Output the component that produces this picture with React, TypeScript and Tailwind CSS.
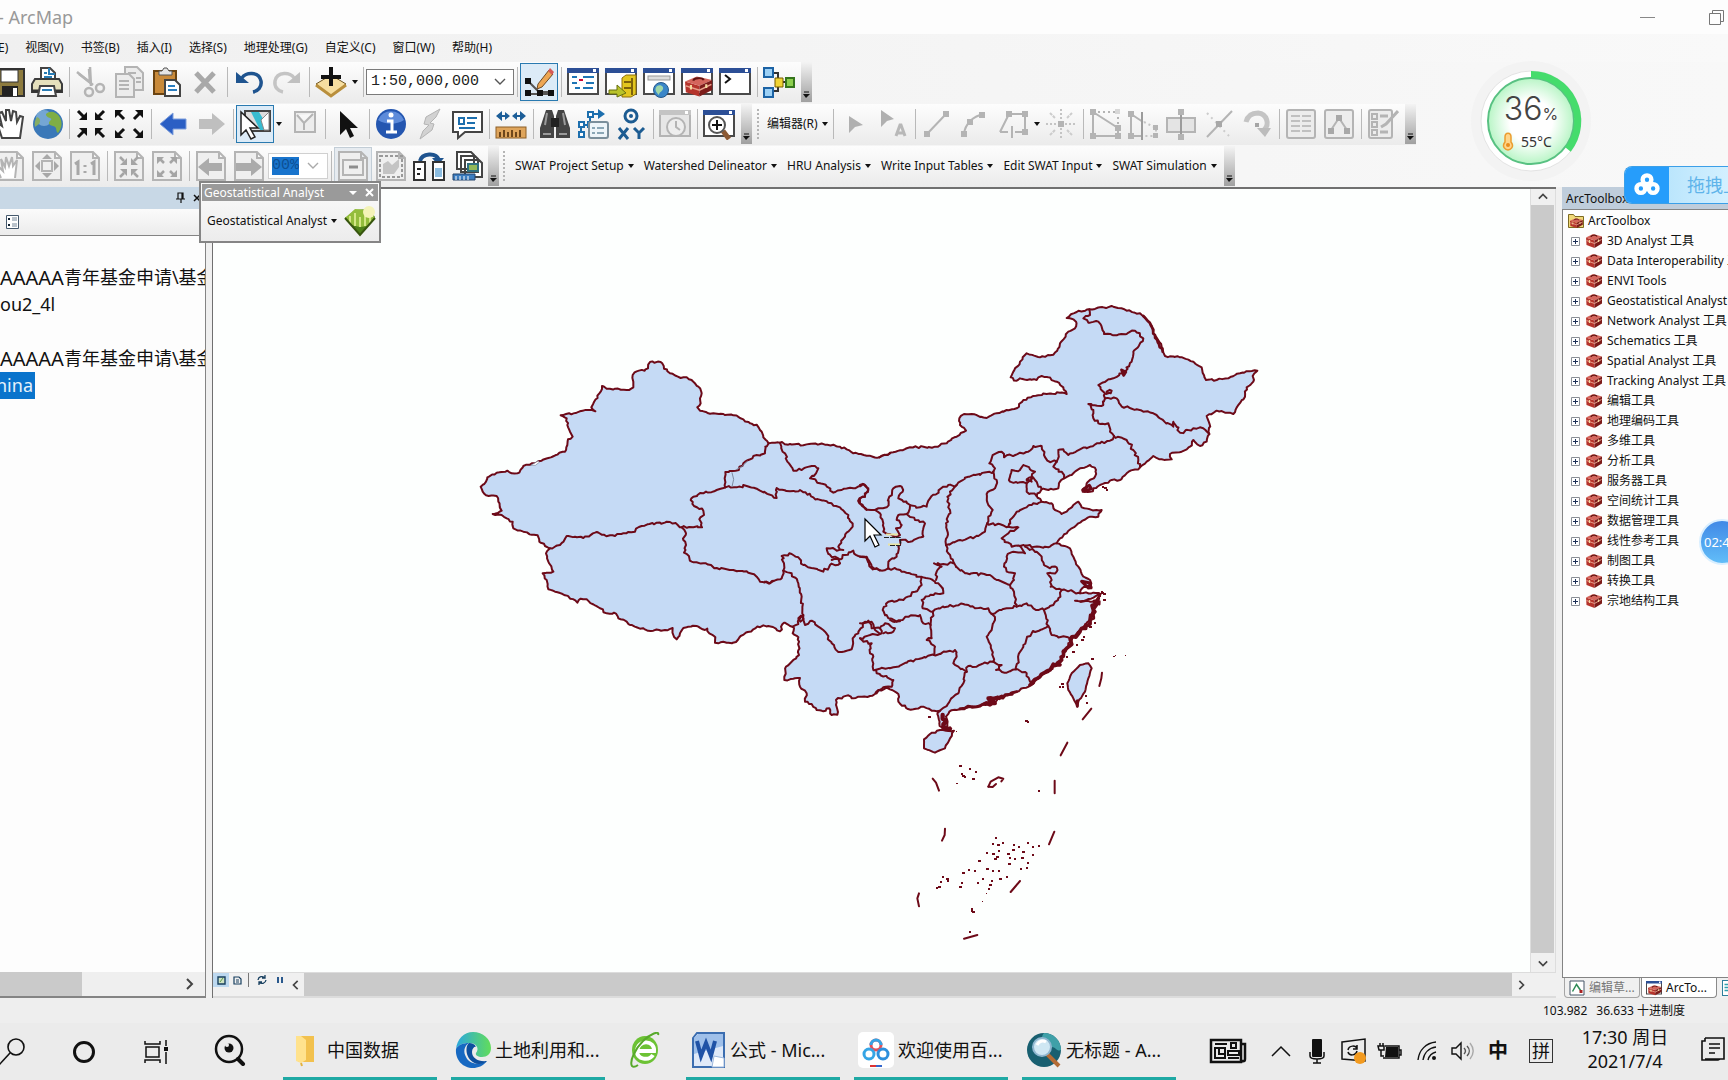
import React, { FC, ReactNode } from 'react';
import clsx from 'clsx';

/* ---------- map geometry ---------- */

// Border lines are stored in three tiles, each at three units per map pixel.
const WEST_TOP =
  '1260,460 1228,472 1190,467 1150,460 1130,448 1110,440 1090,434 1050,432 1000,436 960,432 930,428 896,430 880,412 870,390 860,374 840,370 820,358 790,346 760,342 715,340 690,332 682,322 692,310 690,295 695,280 685,260 665,240 650,232 632,234 600,220 582,206 572,186 540,186 534,205 524,212 500,214 488,225 490,245 490,262 470,270 435,266 410,266 396,258 388,280 372,306 364,322 376,334 355,330 320,338 272,346 290,355 292,375 300,395 308,410 294,418 292,435 285,455 262,464 235,474 205,484 180,494 160,498 148,518 125,520 112,512 80,518 52,532 48,545 32,560 38,575 48,586 80,588 85,605 95,632 68,642 95,645 110,655 128,665 130,685 160,695 185,704 203,706 208,725 225,738 240,745 228,760 235,785 250,815 230,818 218,820 230,840 235,868 255,875 285,886 322,908 332,896 350,898 375,916 410,940 432,938 445,955 470,965 480,975 510,986 550,992 585,990 608,984 610,1005 620,1018 630,1000 640,984 655,980 685,980 705,990 712,986 718,1000 732,1008 735,1028 770,1028 798,1026 812,1008 850,988 880,976 905,980 930,994 942,968 960,978 972,984 968,1000 985,1012 987,1065 970,1080 948,1100 943,1140 970,1136 990,1134 990,1160 1010,1180 1005,1205 1025,1212 1040,1230 1060,1234 1078,1225 1085,1245 1102,1244 1098,1200 1120,1190 1135,1186 1145,1195 1165,1190 1200,1188 1215,1182 1225,1170 1255,1165';

const WEST_INNER = [
  '896,430 886,440 885,460 850,468 820,490 797,512 766,516 764,535 766,562',
  '766,562 740,570 700,580 670,590 662,600 672,618 700,632 702,645 688,658 696,682 670,682 635,682 600,666 560,668 515,678 495,695 460,700 435,708 395,704 375,698 340,714 315,710 290,708 270,735 240,745',
  '635,682 648,700 640,720 648,735 642,758 665,785 700,790 740,804 790,810 830,814 860,830 870,845 900,850 935,835 940,812',
  '940,812 942,790 935,768 965,762 985,772 1000,795 1030,805 1060,815 1080,795 1110,790',
  '766,562 800,562 830,558 870,572 920,594 920,564 960,574 990,570 1030,592 1070,604 1110,622 1135,645 1148,680 1125,710 1105,740 1120,750 1095,748 1070,745 1075,762 1105,775 1110,790',
  '1085,780 1112,778 1118,765 1125,765 1150,752 1165,768 1190,770 1205,800 1230,812',
  '930,428 945,460 952,485 970,512 1000,506 1025,498 1045,505 1038,520 1020,535 1060,552 1090,578 1115,570 1150,565 1180,552 1195,565 1185,590 1168,595 1168,610 1190,630',
  '940,812 965,820 985,850 995,890 1000,945 985,960 985,972 968,980',
  '1000,945 1005,975 1025,962 1045,980 1065,995 1085,1030 1105,1056 1145,1048 1148,1015 1165,1000 1172,985 1185,965 1205,965 1215,990 1230,1000',
];

const EAST_OUTLINE =
  '58,502 90,488 150,472 225,470 260,460 290,440 318,422 300,405 298,385 312,372 335,372 380,384 410,370 440,360 470,355 490,330 520,318 560,312 600,308 620,312 610,292 590,275 565,262 545,258 530,270 510,268 480,265 470,272 452,262 460,245 480,215 500,190 540,202 570,196 592,182 600,160 625,125 645,115 648,95 640,88 620,84 650,66 688,58 720,52 760,50 800,62 840,70 870,100 880,130 905,170 915,198 960,202 1000,215 1025,232 1038,270 1070,270 1105,265 1140,250 1168,244 1192,242 1178,258 1180,275 1160,292 1155,320 1135,345 1120,372 1095,368 1070,362 1040,378 1048,400 1048,432 1040,455 1020,468 1000,450 990,470 965,485 930,492 935,508 905,508 880,498 860,515 840,532 800,550 780,570 750,572 720,585 690,605 668,605 680,580 705,560 708,540 690,525 660,535 635,555 612,565 600,575 595,595 565,600 545,598 530,618 545,635 575,640 585,660 605,672 620,665 640,645 655,635 665,652 690,658 725,660 715,680 690,680 655,700 635,715 620,730 600,745 590,760 630,775 640,800 655,830 665,852 690,870 694,895 672,890 660,910 700,908 722,912 680,930 645,932 690,935 715,930 700,960 690,990 665,1015 640,1040 620,1075 605,1110 570,1140 540,1160 510,1185 470,1205 420,1220 400,1240 350,1250 300,1258 268,1265 258,1280 265,1318 248,1318 238,1300 232,1272 240,1262 215,1262 190,1250 160,1258 138,1254 115,1235 115,1212 85,1195';

const EAST_INNER = [
  '0,585 15,585 25,600 15,620 0,625 0,640 20,658 45,660 80,652 88,620 100,595 125,590 128,605 115,625 130,635 150,645 180,652 200,650 205,632 250,590 290,585 325,560 400,545',
  '45,660 60,670 70,700 70,725 90,732 105,740 120,735 108,715 125,705 110,690 115,675 140,672 150,648',
  '140,672 165,690 195,700 190,740 150,755 120,750 115,770 110,800 90,810 85,835',
  '0,800 20,805 35,835 65,842 85,835',
  '85,835 110,838 150,850 180,860 215,868 235,880 248,895',
  '290,585 270,605 262,635 270,660 258,700 262,740 258,765',
  '258,765 265,790 280,815 288,830',
  '280,820 250,822 222,820 245,830 230,845 228,870',
  '258,765 300,750 355,738 375,725 382,700',
  '400,545 410,570 405,595 380,612 385,645 398,660 385,680 382,700',
  '400,545 405,535 388,520 395,505 408,490 425,485 432,502 480,488 505,485 520,468 545,468 552,495 562,512 590,515',
  '590,515 580,530 605,545 612,565',
  '590,515 595,480 610,478 625,495 660,478 720,460 750,452 762,438',
  '450,560 455,540 480,540 490,525 510,538 525,545 515,560 500,580 450,575 450,560',
  '515,560 525,570 535,590 545,598',
  '500,580 500,605 530,618',
  '500,568 518,562 515,575 500,572',
  '382,700 445,710 450,690 470,665 510,645 545,635',
  '445,710 475,712 445,730 425,745 455,770 480,768 510,765 525,770 555,770 570,770 590,760',
  '480,768 495,790 460,785 440,800 432,830 440,845 465,850 462,870 450,885',
  '288,830 320,850 380,855 410,870 450,885 462,905 470,945',
  '495,770 530,785 545,800 552,825 570,835 590,832 590,845 575,850 562,850 575,870 572,890 605,900 640,905 660,910',
  '605,900 595,925 580,945 552,960 520,955 500,940 470,950',
  '470,950 440,955 395,972 385,955 345,955 325,945 310,942 280,950 270,945 235,955 218,965',
  '248,895 250,910 225,910 185,930 188,955 218,965',
  '185,860 185,885 165,905 130,930 85,935 68,960 85,985 110,995 140,980 180,975 190,1000 212,1005',
  '218,965 212,1000 215,1045 200,1050 225,1070 222,1095',
  '222,1095 185,1105 140,1118 100,1132 45,1140',
  '0,1045 10,1055 35,1060 30,1090 40,1100 38,1130 50,1150 100,1170 95,1190 70,1192 50,1210',
  '0,1045 30,1035 65,1030 60,1015',
  '0,1000 25,992 35,1015 60,1015 75,1000 105,1015 100,1025 70,1030',
  '90,990 120,994',
  '395,972 405,990 395,1020 380,1040 395,1080 400,1115',
  '222,1095 285,1080 290,1100 280,1120 295,1130 320,1145',
  '320,1145 325,1128 350,1130 370,1120 400,1115',
  '400,1115 425,1125 408,1140 440,1148 468,1138',
  '468,1138 475,1110 490,1065 515,1030 565,1008',
  '552,960 565,1008 575,1035 605,1040 630,1045',
  '468,1138 500,1150 510,1175',
  '320,1145 310,1180 295,1210 265,1240 240,1262',
  '688,58 690,75 670,85 685,98 715,95 732,132 770,136 800,132 825,122 850,145 820,185 815,215 795,245 760,265 715,285 735,310 735,325',
  '735,325 770,325 785,350 830,358 880,370 900,385 940,410 940,395 960,428 1000,415 1020,412 1048,432',
  '735,325 730,345 685,342 700,360 700,385 715,400 745,400 750,425 762,438',
  '762,438 800,450 820,480 835,510 840,532',
  '740,305 755,302 752,310 738,312',
];

const ISLAND_COAST =
  '715,925 700,960 690,990 665,1015 640,1040 620,1075 605,1110 570,1140 540,1160 510,1185';
const PEARL_COAST = '470,1205 420,1222 400,1236 380,1238 350,1250 300,1256';
const TAIWAN =
  '685,1120 695,1135 685,1165 675,1205 655,1235 652,1250 640,1225 625,1200 622,1180 635,1150 660,1125 685,1120';
const HAINAN =
  '432,598 450,582 480,570 522,572 510,595 495,625 465,638 432,625 432,598';

const SEA_DASHES = [
  '966,398 964,415 958,438',
  '934,506 908,538',
  '862,608 842,646',
  '824,722 824,760',
  '458,716 468,728 477,752',
  '495,866 494,885 486,902',
  '823,875 807,913',
  '720,1023 692,1056',
  '417,1060 412,1075 417,1099',
  '592,1185 552,1196',
  '625,740 632,725 655,712 670,716 664,724',
  '625,740 638,741 648,732',
];

const SEA_DOTS =
  '540,679 571,688 588,695 548,708 556,712 546,702 580,718 648,893 640,912 655,915 668,908 622,940 640,942 658,934 650,952 644,956 654,950 703,915 700,930 717,922 743,908 730,935 760,920 778,918 685,942 690,955 706,958 727,955 745,970 760,944 688,971 722,988 740,985 596,962 568,990 586,992 622,986 640,992 658,992 548,1000 608,1016 595,1028 660,1018 680,1010 637,1022 630,1034 628,1046 546,1030 541,1040 488,1012 504,1024 502,1018 484,1026 470,1044 476,1042 577,1106 575,1112 580,1117 570,1177 776,752 738,543 743,545 450,530 937,357 918,468 920,490 845,432 840,440 848,440 965,160 960,168 955,158 972,162';
const FAINT_DOTS = '1000,350 1008,346 1036,346 972,180 620,1062 607,1086 530,730 530,574';

const toPoints = (src: string) =>
  src.split(' ').map(pair => pair.split(',').map(Number) as [number, number]);

// Breaks every leg into short steps and shifts them a little, so borders look surveyed.
const rough = (src: string, amp = 4) => {
  const pts = toPoints(src);
  let seed = pts[0][0] * 31 + pts[0][1] * 17 + pts.length;
  const next = () => {
    seed = (seed * 9301 + 49297) % 233280;
    return seed / 233280 - 0.5;
  };
  let d = `M${pts[0][0]} ${pts[0][1]}`;
  for (let i = 1; i < pts.length; i++) {
    const [x0, y0] = pts[i - 1];
    const [x1, y1] = pts[i];
    const steps = Math.max(1, Math.round(Math.hypot(x1 - x0, y1 - y0) / 8));
    for (let s = 1; s < steps; s++) {
      const t = s / steps;
      const x = x0 + (x1 - x0) * t + next() * amp * 2;
      const y = y0 + (y1 - y0) * t + next() * amp * 2;
      d += `L${x.toFixed(1)} ${y.toFixed(1)}`;
    }
    d += `L${x1} ${y1}`;
  }
  return d;
};

const Dots: FC<{ src: string; size: number }> = ({ src, size }) => (
  <>
    {toPoints(src).map(([x, y], i) => (
      <rect
        key={i}
        x={x - size / 2}
        y={y - size / 2}
        width={size + (i % 3 === 0 ? 3 : 0)}
        height={size}
      />
    ))}
  </>
);

const ChinaMap: FC = () => (
  <svg className="block h-full w-full" role="img" aria-label="China">
    <g transform="translate(-213 -189)">
      <g fill="#c5daf5">
        <path
          transform="translate(470 300) scale(.33333)"
          d={`M${WEST_TOP} 1270,1160 1270,460Z`}
        />
        <path
          transform="translate(860 290) scale(.33333)"
          d={`M0,495 30,497 ${EAST_OUTLINE} 50,1210 0,1220Z`}
        />
        <path transform="translate(860 290) scale(.33333)" d={`M${TAIWAN}Z`} />
        <path transform="translate(780 540) scale(.33333)" d={`M${HAINAN}Z`} />
      </g>
      <g
        fill="none"
        stroke="#6d0a18"
        strokeWidth="6"
        strokeLinejoin="round"
        strokeLinecap="round"
      >
        <g transform="translate(470 300) scale(.33333)">
          <path d={rough(WEST_TOP, 3)} />
          {WEST_INNER.map(line => (
            <path key={line} d={rough(line)} />
          ))}
          <path d="M786 518L791 538 786 560M800 508L815 500 832 484" stroke="#7d8ba0" strokeWidth="3" />
          <path d="M184 496L196 496 208 487 205 483z" fill="#fff" stroke="#7d8ba0" strokeWidth="2" />
          <path d="M985 955l8-8 8 10-10 8zM885 845l12 6 14-8" />
        </g>
        <g transform="translate(860 290) scale(.33333)">
          <path d={rough(EAST_OUTLINE, 3)} />
          {EAST_INNER.map(line => (
            <path key={line} d={rough(line)} />
          ))}
          <path d={rough(ISLAND_COAST, 8)} strokeWidth="11" />
          <path d={rough('720,915 708,950 702,985 678,1015', 9)} strokeWidth="7" />
          <path d={rough(PEARL_COAST, 6)} strokeWidth="9" />
          <path d={rough('425,1220 400,1226 385,1225 405,1240 380,1240', 5)} strokeWidth="12" />
          <path d={rough('248,1275 256,1290 250,1312 270,1316', 5)} strokeWidth="13" />
          <path d={rough('850,78 872,105 885,135 908,185', 3)} strokeWidth="8" />
          <path d="M668 600l20-14 6 10-20 8zM665 874l22 4 6 14-14-4zM785 240l12 6-6 10z" strokeWidth="9" />
          <path d={rough(TAIWAN, 1)} />
          <path d="M652 1232v16" strokeWidth="9" />
        </g>
        <g transform="translate(780 540) scale(.33333)">
          <path d={rough(HAINAN, 2)} />
          {SEA_DASHES.map(line => (
            <path key={line} d={`M${line}`} />
          ))}
        </g>
      </g>
      <g transform="translate(780 540) scale(.33333)" fill="#6d0a18" shapeRendering="crispEdges">
        <Dots src={SEA_DOTS} size={6} />
        <Dots src={FAINT_DOTS} size={3} />
      </g>
      <g transform="translate(860 290) scale(.33333)" fill="#6d0a18" shapeRendering="crispEdges">
        <Dots src="735,595 742,600 728,590 665,1050 672,1040 650,1065 690,1012 705,1000 655,1028 640,1085 620,1100 725,905 732,930 208,1280 498,1292" size={6} />
      </g>
      <path d="M886 534.500h12M888 544.500h12" stroke="#e9e3a2" strokeWidth="2" />
      <path d="M884 537.500h16.500v8H890" fill="none" stroke="#222" strokeDasharray="5 1" />
    </g>
    <path
      d="M652 330v22l5-5 5 11 4-2-5-10h7z"
      fill="#fff"
      stroke="#000"
      strokeWidth="1.2"
    />
  </svg>
);

/* ---------- icons ---------- */

const G = '#b4b4b4';

const Svg: FC<{ children: ReactNode; className?: string; box?: string }> = ({
  children,
  className = 'h-8 w-8 shrink-0',
  box = '0 0 32 32',
}) => (
  <svg viewBox={box} className={className} fill="none" aria-hidden="true">
    {children}
  </svg>
);

const WindowFrame: FC<{ gray?: boolean }> = ({ gray }) => (
  <>
    <rect x="1" y="3" width="30" height="25" fill={gray ? '#e6e6e6' : '#fff'} stroke={gray ? G : '#4a4a4a'} strokeWidth="2" />
    <rect x="0" y="2" width="32" height="5" fill={gray ? '#c4c4c4' : '#2c4f96'} />
    <rect x="26" y="3" width="3" height="3" fill="#fff" />
  </>
);

const Page: FC = () => (
  <path d="M2 2h22l6 6v22H2zM24 2v6h6" stroke={G} strokeWidth="2" fill="#efefef" />
);

const Toolbox: FC = () => (
  <>
    <path d="M0 9l17 6v15L1 24z" fill="#b5342c" />
    <path d="M0 9L14 2l18 5-15 8z" fill="#d4655c" />
    <path d="M17 15l15-8v14L17 30z" fill="#7c1c1a" />
    <path d="M10 8c0-4 10-5 12-1" stroke="#5e1311" strokeWidth="2.5" />
    <path d="M1 15l16 6 14-8" stroke="#e8a08c" strokeWidth="2" />
    <path d="M7 14v6M25 13v5" stroke="#f3d9a0" strokeWidth="2.5" />
  </>
);

const icons: Record<string, ReactNode> = {
  save: (
    <>
      <path d="M2 3h29v27H6l-4-4z" fill="#8d7b3f" stroke="#333" strokeWidth="2" />
      <rect x="8" y="4" width="17" height="12" fill="#fff" stroke="#333" />
      <rect x="9" y="20" width="16" height="10" fill="#222" />
      <rect x="20" y="22" width="4" height="8" fill="#fff" />
    </>
  ),
  print: (
    <>
      <path d="M10 14V2h9l5 5v7" fill="#fff" stroke="#444" strokeWidth="2" />
      <path d="M18 2v6h6M13 7h3M13 11h8" stroke="#2a7db5" strokeWidth="2" />
      <path d="M4 13h24l3 5v8H1v-8z" fill="#e5e0bc" stroke="#3c3c3c" strokeWidth="2" />
      <path d="M1 25h30" stroke="#333" strokeWidth="3" />
      <path d="M9 20h14l2 10H7z" fill="#fff" stroke="#444" strokeWidth="2" />
      <path d="M11 24h10" stroke="#2a7db5" strokeWidth="2" />
    </>
  ),
  cut: (
    <g stroke={G} strokeWidth="2.500">
      <path d="M15 1l1 19M2 6l16 13" />
      <path d="M14 3l1 14M4 8l12 9" />
      <circle cx="14" cy="26" r="4" />
      <circle cx="25" cy="22" r="4" />
    </g>
  ),
  copy: (
    <g stroke={G} strokeWidth="2" fill="#ececec">
      <path d="M12 1h12l6 6v17H12z" />
      <path d="M3 8h13l5 5v18H3z" />
      <path d="M6 15h10M6 19h10M6 23h10M15 7h8M23 12h5M23 16h5" />
    </g>
  ),
  paste: (
    <>
      <path d="M3 5h22v23H3z" fill="#c98a3a" stroke="#6b4412" strokeWidth="2" />
      <path d="M8 9V5h3l2-3h3l2 3h3v4z" fill="#e5e5e5" stroke="#555" />
      <path d="M14 14h10l5 5v11H14z" fill="#fff" stroke="#444" strokeWidth="2" />
      <path d="M17 20h7M17 24h9" stroke="#2b7ec0" strokeWidth="2" />
    </>
  ),
  remove: <path d="M7 7l18 19M25 7L7 26" stroke="#a9a9a9" strokeWidth="5" />,
  undo: (
    <>
      <path d="M9 12c3-6 17-7 19 3 1 6-3 10-8 11" stroke="#1f548f" strokeWidth="3.500" />
      <path d="M3 6v11h13z" fill="#1f548f" />
    </>
  ),
  redo: (
    <>
      <path d="M23 12C20 6 6 5 4 15c-1 6 3 10 8 11" stroke="#c4c4c4" strokeWidth="3.500" />
      <path d="M29 6v11H16z" fill="#c0c0c0" />
    </>
  ),
  add: (
    <>
      <path d="M16 9L31 18 16 30 1 18z" fill="#f6deA0" stroke="#6e5522" />
      <path d="M1 19l15 11 15-11" stroke="#b98f3c" strokeWidth="3" />
      <path d="M16 1v19M6 11h20" stroke="#111" strokeWidth="4" />
    </>
  ),
  editor: (
    <>
      <path d="M4 14l12 12h12M5 28h22" stroke="#555" strokeWidth="2" />
      <path d="M15 18L26 4l4 4-11 13-5 2z" fill="#eda653" stroke="#6d4a26" />
      <path d="M25 5l2-3 4 4-2 3z" fill="#d65a57" />
      <path d="M2 12h6v6H2zM2 24h6v6H2zM14 24h6v6h-6zM25 24h6v6h-6z" fill="#111" />
    </>
  ),
  contents: (
    <>
      <WindowFrame />
      <path d="M5 11h5M5 17h5M8 22h5M16 11h11M19 17h8M16 22h10" stroke="#1e75b5" strokeWidth="2" />
      <path d="M12 14h4" stroke="#c03" strokeWidth="2" />
    </>
  ),
  catalog: (
    <>
      <WindowFrame />
      <path d="M17 12l4-3h10v19l-5 3h-9z" fill="#e2c61f" stroke="#8d6f0d" />
      <path d="M19 16h7M19 22h7M27 12v17" stroke="#7d620b" strokeWidth="2" />
      <path d="M4 24h8v-5l9 8-9 4v-3H4z" fill="#b9c32a" stroke="#68700f" />
    </>
  ),
  search: (
    <>
      <WindowFrame />
      <rect x="5" y="10" width="22" height="4" fill="#ddd" stroke="#999" />
      <circle cx="18" cy="24" r="7.500" fill="#3a86c8" stroke="#24588a" />
      <path d="M14 20c3-2 7 0 6 3s-4 3-4 6c-3-3-5-6-2-9z" fill="#9fd7a8" />
    </>
  ),
  toolboxWindow: (
    <>
      <WindowFrame />
      <g transform="translate(4 9) scale(.85 .72)">
        <Toolbox />
      </g>
    </>
  ),
  python: (
    <>
      <WindowFrame />
      <path d="M6 9l5 4-5 4" stroke="#111" strokeWidth="2" />
    </>
  ),
  model: (
    <>
      <path d="M9 7h6v18H9M15 16h12" stroke="#333" strokeWidth="2" />
      <rect x="1" y="2" width="9" height="9" fill="#9cd0f5" stroke="#1c63a5" strokeWidth="2" />
      <rect x="1" y="22" width="9" height="9" fill="#9cd0f5" stroke="#1c63a5" strokeWidth="2" />
      <path d="M12 12h8v9h-8z" fill="#f0d334" stroke="#765c00" />
      <rect x="23" y="12" width="8" height="9" fill="#8ccf4d" stroke="#35751c" strokeWidth="2" />
    </>
  ),
  pan: (
    <path
      d="M9 30L6 21 1 15l3-1 5 4L6 5l3-1 4 9 0-11h3l2 11 2-10 3 1 1 10 3-6 3 1-3 21z"
      fill="#fff"
      stroke="#444"
      strokeWidth="2"
    />
  ),
  globe: (
    <>
      <circle cx="17" cy="16" r="15" fill="#3a78b8" />
      <circle cx="13" cy="10" r="8" fill="#8db9e0" opacity=".7" />
      <path d="M15 6c4-4 10-2 13 2 4 6 3 12-1 17-3-2 0-6-5-7s-5-4-2-6-6-2-5-6z" fill="#7fae45" />
      <path d="M6 9c3 1 4 4 2 7l-4 3c-1-4 0-7 2-10z" fill="#86ad63" />
    </>
  ),
  zoomIn: (
    <>
      <path d="M3 3l6 6M29 3l-6 6M3 29l6-6M29 29l-6-6" stroke="#111" strokeWidth="3" />
      <path d="M12 4v8H4zM20 4v8h8zM12 28v-8H4zM20 28v-8h8z" fill="#111" />
    </>
  ),
  zoomOut: (
    <>
      <path d="M5 5l6 6M27 5l-6 6M5 27l6-6M27 27l-6-6" stroke="#111" strokeWidth="3" />
      <path d="M2 2h8l-8 8zM30 2h-8l8 8zM2 30h8l-8-8zM30 30h-8l8-8z" fill="#111" />
    </>
  ),
  back: <path d="M3 16L16 5v6h13v10H16v6z" fill="#2b5fc4" stroke="#7f9fdc" />,
  forward: <path d="M30 16L17 5v6H4v10h13v6z" fill="#bfbfbf" />,
  select: (
    <>
      <rect x="6" y="3" width="25" height="20" fill="#ddd" stroke="#444" strokeWidth="2" />
      <path d="M12 4h8l6 10v8h-5z" fill="#38bcd0" />
      <path d="M22 12l8-8v18h-5z" fill="#fff" stroke="#888" />
      <path d="M2 4v23l5-5 5 9 4-2-5-9h8z" fill="#fff" stroke="#222" strokeWidth="1.500" />
    </>
  ),
  clear: <path d="M8 4h20v20H8zM10 7l7 8 9-9M17 15v7" stroke={G} strokeWidth="2" fill="#ededed" />,
  pointer: <path d="M9 3v24l6-6 4 9 4-2-4-8h8z" fill="#111" />,
  info: (
    <>
      <circle cx="16" cy="16" r="15" fill="#2456b0" />
      <path d="M3 12a14 14 0 0126 0c-8 5-18 5-26 0z" fill="#5d8bda" />
      <path d="M12 13h5v11M11 24h11" stroke="#fff" strokeWidth="3" />
      <circle cx="16" cy="7" r="2.500" fill="#fff" />
    </>
  ),
  hyperlink: <path d="M27 1L13 9l-2 7 5 1-6 6-3 8 12-9 2-6-4-1 6-6z" fill="#d2d2d2" stroke={G} />,
  popup: (
    <>
      <path d="M2 4h29v20H14l-7 6v-6H2z" fill="#fff" stroke="#444" strokeWidth="2" />
      <rect x="8" y="10" width="5" height="6" stroke="#1d6fae" strokeWidth="2" />
      <path d="M16 10h10M16 15h8M8 20h16" stroke="#1d6fae" strokeWidth="2" />
    </>
  ),
  measure: (
    <>
      <path d="M3 8h9M20 8h9" stroke="#1c5e98" strokeWidth="2" />
      <path d="M1 8l6-5v10zM31 8l-6-5v10zM15 8l-5-4v8zM17 8l5-4v8z" fill="#1c5e98" />
      <rect x="1" y="19" width="30" height="11" fill="#dfa55c" stroke="#8c5e26" />
      <path d="M5 29v-5M9 29v-7M13 29v-5M17 29v-7M21 29v-5M25 29v-7" stroke="#6e461a" strokeWidth="2" />
    </>
  ),
  find: (
    <>
      <path d="M7 2h6l2 6v22H1V20zM25 2h-6l-2 6v22h14V20z" fill="#444" />
      <path d="M12 10h8v9h-8z" fill="#222" />
      <path d="M4 26h8M20 26h8M8 5l-2 12M24 5l2 12" stroke="#9a9a9a" strokeWidth="2" />
    </>
  ),
  route: (
    <>
      <path d="M4 26V17h9V6h11" stroke="#1d6fae" strokeWidth="2" />
      <path d="M21 1l7 5-7 5z" fill="#1d6fae" />
      <path d="M2 24h5v5H2zM2 14h5v5H2zM11 14h5v5h-5zM11 4h5v5h-5z" fill="#fff" stroke="#1d6fae" strokeWidth="2" />
      <rect x="12" y="14" width="19" height="16" rx="2" fill="#eef5f9" stroke="#7b8f9b" strokeWidth="2" />
      <path d="M15 20h3M20 20h7M15 25h3M20 25h7" stroke="#8ba7b6" strokeWidth="2" />
    </>
  ),
  xy: (
    <>
      <circle cx="16" cy="8" r="6" stroke="#1d5c92" strokeWidth="3" />
      <circle cx="16" cy="8" r="2" fill="#1d5c92" />
      <path d="M4 20l9 11M13 20L4 31M19 20l5 5 5-5M24 25v6" stroke="#1d5c92" strokeWidth="3" />
    </>
  ),
  time: (
    <>
      <WindowFrame gray />
      <circle cx="17" cy="19" r="9" fill="#eee" stroke={G} strokeWidth="2" />
      <path d="M17 13v6l4 3" stroke={G} strokeWidth="2" />
    </>
  ),
  viewer: (
    <>
      <WindowFrame />
      <path d="M20 23l6 8" stroke="#8c5a35" strokeWidth="5" />
      <circle cx="14" cy="17" r="8" fill="#fff" stroke="#555" strokeWidth="2" />
      <path d="M14 12v10M9 17h10" stroke="#111" strokeWidth="2" />
    </>
  ),
  editArrow: <path d="M10 8l14 9-8 2-6 6z" fill="#b0b0b0" />,
  editText: (
    <>
      <path d="M4 2l13 9-7 2-6 6z" fill="#b0b0b0" />
      <path d="M19 28l4-11h1l4 11M20 25h7" stroke="#b8b8b8" strokeWidth="3" />
    </>
  ),
  line: (
    <>
      <path d="M6 26L25 6" stroke={G} strokeWidth="2" />
      <path d="M3 23h6v6H3zM22 3h6v6h-6z" fill={G} />
    </>
  ),
  arc: (
    <>
      <path d="M5 26c1-10 9-18 20-20" stroke={G} strokeWidth="2" />
      <path d="M2 23h6v6H2zM8 11h6v6H8zM20 4h6v6h-6z" fill={G} />
    </>
  ),
  trace: (
    <>
      <path d="M3 24L12 6h16v18H18M3 24h8M15 18v12" stroke={G} strokeWidth="2" />
      <path d="M9 3h6v6H9zM25 3h6v6h-6zM25 21h6v6h-6z" fill={G} />
    </>
  ),
  point: (
    <>
      <path d="M16 1v12M16 20v12M1 16h12M20 16h12" stroke="#c4c4c4" strokeWidth="2" strokeDasharray="2 2" />
      <path d="M5 5l5 5M27 5l-5 5M5 27l5-5M27 27l-5-5" stroke="#cccccc" strokeWidth="2" strokeDasharray="3 1" />
      <rect x="13" y="13" width="6" height="6" fill={G} />
    </>
  ),
  reshape: (
    <>
      <path d="M4 4v24h25v-8L4 4z" stroke={G} strokeWidth="2" />
      <path d="M4 4h25v16" stroke={G} strokeWidth="2" strokeDasharray="2 3" />
      <path d="M1 1h6v6H1zM26 17h6v6h-6zM26 25h6v6h-6zM1 25h6v6H1z" fill={G} />
      <rect x="26" y="1" width="5" height="5" fill="#d8d8d8" />
    </>
  ),
  cutPolygon: (
    <>
      <path d="M4 6v22h10M4 6l12 8" stroke={G} strokeWidth="2" />
      <path d="M15 4v28" stroke="#9c9c9c" strokeWidth="2" />
      <path d="M17 14l12 6v8H17" stroke="#c4c4c4" strokeWidth="2" strokeDasharray="2 3" />
      <path d="M1 3h6v6H1zM1 25h6v6H1zM26 17h5v5h-5zM26 25h5v5h-5z" fill={G} />
    </>
  ),
  split: (
    <>
      <rect x="2" y="10" width="28" height="14" fill="#e4e4e4" stroke={G} strokeWidth="2" />
      <path d="M16 2v28" stroke="#9c9c9c" strokeWidth="2" />
      <path d="M13 1h6v6h-6zM13 26h6v6h-6z" fill={G} />
    </>
  ),
  splitLine: (
    <>
      <path d="M4 29L29 3" stroke={G} strokeWidth="2" />
      <path d="M4 5l22 23" stroke="#cccccc" strokeWidth="2" strokeDasharray="2 4" />
      <rect x="13" y="13" width="6" height="6" fill="#a8a8a8" />
    </>
  ),
  rotate: (
    <>
      <path d="M5 14C7 6 13 5 17 5c9 1 12 11 6 17" stroke="#c4c4c4" strokeWidth="5" />
      <path d="M16 20h14l-6 9z" fill="#bcbcbc" />
      <rect x="14" y="15" width="4" height="4" fill="#a5a5a5" />
    </>
  ),
  table: (
    <>
      <rect x="2" y="2" width="28" height="28" rx="2" fill="#ececec" stroke={G} strokeWidth="2" />
      <path d="M6 8h9M17 8h9M6 13h9M17 13h9M6 18h9M17 18h9M6 23h9M17 23h9" stroke="#c0c0c0" strokeWidth="2" />
    </>
  ),
  sketch: (
    <>
      <rect x="2" y="2" width="28" height="28" rx="2" fill="#ededed" stroke={G} strokeWidth="2" />
      <path d="M8 22l8-12 8 12" stroke={G} strokeWidth="2" />
      <path d="M13 7h6v6h-6zM5 20h6v6H5zM21 20h6v6h-6z" fill="#a8a8a8" />
    </>
  ),
  create: (
    <>
      <rect x="2" y="2" width="23" height="28" rx="2" fill="#ececec" stroke={G} strokeWidth="2" />
      <path d="M5 6h5v5H5zM5 14h5v5H5zM5 22h5v5H5z" stroke={G} strokeWidth="2" />
      <path d="M13 8h8M13 24h8M14 19l5-3L31 3" stroke={G} strokeWidth="3" />
    </>
  ),
  pagePan: (
    <>
      <Page />
      <path d="M8 28l-4-9 3-1 3 3-2-12 4 8 1-10 3 9 3-9 1 9 4-6-2 18" fill="#fff" stroke={G} strokeWidth="2" />
    </>
  ),
  pageFull: (
    <>
      <Page />
      <path d="M16 4l5 5H11zM16 28l5-5H11zM4 16l5-5v10zM28 16l-5-5v10z" fill="#a8a8a8" />
      <rect x="11" y="11" width="10" height="10" stroke={G} strokeWidth="2" />
    </>
  ),
  pageOne: (
    <>
      <Page />
      <path d="M6 14l3-2v13M22 14l3-2v13M16 15v2M16 21v2" stroke="#a8a8a8" strokeWidth="3" />
    </>
  ),
  pageIn: (
    <>
      <Page />
      <path d="M7 7l4 4M25 7l-4 4M7 27l4-4M25 27l-4-4" stroke="#a5a5a5" strokeWidth="2.500" />
      <path d="M14 8v7H7zM18 8v7h7zM14 26v-7H7zM18 26v-7h7z" fill="#a5a5a5" />
    </>
  ),
  pageOut: (
    <>
      <Page />
      <path d="M9 9l4 4M23 9l-4 4M9 25l4-4M23 25l-4-4" stroke="#a5a5a5" strokeWidth="2.500" />
      <path d="M6 7h7l-7 7zM26 7h-7l7 7zM6 27h7l-7-7zM26 27h-7l7-7z" fill="#a5a5a5" />
    </>
  ),
  pageBack: (
    <>
      <Page />
      <path d="M3 17L14 8v5h13v8H14v5z" fill="#ababab" />
    </>
  ),
  pageForward: (
    <>
      <Page />
      <path d="M29 17L18 8v5H3v8h15v5z" fill="#ababab" />
    </>
  ),
  draft: (
    <>
      <Page />
      <path d="M6 10h20v15H6z" stroke={G} strokeWidth="2" />
      <path d="M12 17h9" stroke="#8e8e8e" strokeWidth="3" />
    </>
  ),
  focus: (
    <>
      <Page />
      <path d="M5 6h22v21H5z" stroke="#999" strokeWidth="2" strokeDasharray="3 2" />
      <path d="M8 24V14l5-3 4 4 7-6v8l-5 7z" fill="#c4c4c4" />
    </>
  ),
  layout: (
    <>
      <path d="M7 11c2-8 16-9 19-1" stroke="#1f548f" strokeWidth="4" />
      <path d="M19 8h12l-6 7z" fill="#1f548f" />
      <path d="M1 12h11v18H1zM20 12h11v18H20z" fill="#fff" stroke="#333" strokeWidth="2" />
      <path d="M4 19h4M4 24h3" stroke="#222" strokeWidth="2" />
      <path d="M22 18h7v9h-7z" fill="#8bbce0" />
    </>
  ),
  pages: (
    <>
      <path d="M6 2h14l3 3v14H6zM10 6h14l3 3v13H10zM14 10h14l3 3v14H14z" fill="#fff" stroke="#444" strokeWidth="2" />
      <path d="M17 14h10v7H17z" fill="#93b95a" stroke="#2f6f80" strokeWidth="2" />
      <path d="M2 24h22v6H2z" fill="#3c7dc0" stroke="#24446c" />
      <path d="M5 30v-4M9 30v-4M13 30v-4M17 30v-4" stroke="#fff" />
    </>
  ),
};

/* ---------- toolbars ---------- */

const Tool: FC<{ name: string; label: string; active?: boolean; faded?: boolean }> = ({
  name,
  label,
  active,
  faded,
}) => (
  <button
    aria-label={label}
    className={clsx(
      'flex h-[38px] w-[38px] shrink-0 items-center justify-center',
      active && 'border border-[#2a7ab0] bg-[#dcebf7]',
      faded && 'border border-[#c2cdd6] bg-[#e6ebf0]',
    )}
  >
    <Svg>{icons[name]}</Svg>
  </button>
);

const Sep: FC = () => (
  <div className="flex w-[6px] shrink-0 justify-center">
    <div className="h-[30px] w-px bg-[#b9b9b9]" />
  </div>
);

const Caret: FC = () => (
  <Svg box="0 0 6 4" className="h-1 w-[6px] shrink-0">
    <path d="M0 0h6L3 4z" fill="#111" />
  </Svg>
);

const CaretButton: FC<{ label: string }> = ({ label }) => (
  <button aria-label={label} className="flex h-[38px] w-[10px] shrink-0 items-center justify-center">
    <Caret />
  </button>
);

const Overflow: FC = () => (
  <button
    aria-label="Toolbar options"
    className="flex w-[11px] shrink-0 items-end justify-center self-stretch bg-linear-to-b from-[#f4f4f4] to-[#a0a0a0] pb-1"
  >
    <Svg box="0 0 7 7" className="h-[7px] w-[7px]">
      <path d="M1 1h5" stroke="#111" />
      <path d="M0 3h7L3 7z" fill="#111" />
    </Svg>
  </button>
);

const Grip: FC = () => (
  <div className="h-[30px] w-0 shrink-0 border-l-2 border-dotted border-[#b5b5b5]" />
);

const Bar: FC<{ children: ReactNode }> = ({ children }) => (
  <div className="flex h-[41px] shrink-0 items-center bg-linear-to-b from-[#fdfdfd] to-[#ebebeb] pb-px">
    {children}
  </div>
);

const MENUS = [
  '视图(V)',
  '书签(B)',
  '插入(I)',
  '选择(S)',
  '地理处理(G)',
  '自定义(C)',
  '窗口(W)',
  '帮助(H)',
];

const SWAT_MENUS = [
  'SWAT Project Setup',
  'Watershed Delineator',
  'HRU Analysis',
  'Write Input Tables',
  'Edit SWAT Input',
  'SWAT Simulation',
];

const Toolbars: FC = () => (
  <div className="flex shrink-0 flex-col gap-px bg-linear-to-r from-[#f1f1f1] to-[#f8f8f8]">
    <div className="-ml-[10px] flex">
      <Bar>
        <Tool name="save" label="Save" />
        <Tool name="print" label="Print" />
        <Sep />
        <Tool name="cut" label="Cut" />
        <Tool name="copy" label="Copy" />
        <Tool name="paste" label="Paste" />
        <Tool name="remove" label="Delete" />
        <Sep />
        <Tool name="undo" label="Undo" />
        <Tool name="redo" label="Redo" />
        <Sep />
        <Tool name="add" label="Add data" />
        <CaretButton label="Add data options" />
        <Sep />
        <div className="relative flex w-[148px] shrink-0 items-center">
          <select
            aria-label="Map scale"
            className="h-[26px] w-full appearance-none border border-[#7a7a7a] bg-white px-1 font-['Liberation_Mono',monospace] text-[15px] leading-6 text-[#222]"
          >
            <option>1:50,000,000</option>
          </select>
          <Svg box="0 0 12 8" className="pointer-events-none absolute right-2 h-2 w-3">
            <path d="M1 1l5 5 5-5" stroke="#555" strokeWidth="1.4" />
          </Svg>
        </div>
        <Sep />
        <Tool name="editor" label="Editor toolbar" active />
        <Sep />
        <Tool name="contents" label="Table of contents" />
        <Tool name="catalog" label="Catalog" />
        <Tool name="search" label="Search" />
        <Tool name="toolboxWindow" label="ArcToolbox" />
        <Tool name="python" label="Python" />
        <Sep />
        <Tool name="model" label="ModelBuilder" />
        <div className="w-[3px]" />
        <Overflow />
      </Bar>
    </div>

    <div className="-ml-[10px] flex">
      <Bar>
        <Tool name="pan" label="Pan" />
        <Tool name="globe" label="Full extent" />
        <Sep />
        <Tool name="zoomIn" label="Fixed zoom in" />
        <Tool name="zoomOut" label="Fixed zoom out" />
        <Sep />
        <Tool name="back" label="Previous extent" />
        <Tool name="forward" label="Next extent" />
        <Sep />
        <Tool name="select" label="Select features" active />
        <CaretButton label="Selection options" />
        <Tool name="clear" label="Clear selection" />
        <Sep />
        <Tool name="pointer" label="Select elements" />
        <Sep />
        <Tool name="info" label="Identify" />
        <Tool name="hyperlink" label="Hyperlink" />
        <Tool name="popup" label="HTML popup" />
        <Sep />
        <Tool name="measure" label="Measure" />
        <Sep />
        <Tool name="find" label="Find" />
        <Tool name="route" label="Find route" />
        <Tool name="xy" label="Go to XY" />
        <Sep />
        <Tool name="time" label="Time slider" />
        <Sep />
        <Tool name="viewer" label="Viewer window" />
        <div className="w-[3px]" />
        <Overflow />
      </Bar>
      <Bar>
        <div className="flex w-[78px] shrink-0 items-center gap-2 pl-[5px]">
          <Grip />
          <button className="flex items-center gap-1 whitespace-nowrap">
            编辑器(R)
            <Caret />
          </button>
        </div>
        <Sep />
        <Tool name="editArrow" label="Edit tool" />
        <Tool name="editText" label="Edit annotation" />
        <Sep />
        <Tool name="line" label="Straight segment" />
        <Tool name="arc" label="Arc segment" />
        <Tool name="trace" label="Trace" />
        <CaretButton label="Trace options" />
        <Tool name="point" label="Point" />
        <Sep />
        <Tool name="reshape" label="Edit vertices" />
        <Tool name="cutPolygon" label="Reshape" />
        <Tool name="split" label="Cut polygons" />
        <Tool name="splitLine" label="Split" />
        <Tool name="rotate" label="Rotate" />
        <Sep />
        <Tool name="table" label="Attributes" />
        <Tool name="sketch" label="Sketch properties" />
        <Sep />
        <Tool name="create" label="Create features" />
        <div className="w-[3px]" />
        <Overflow />
      </Bar>
    </div>

    <div className="-ml-[10px] flex">
      <Bar>
        <Tool name="pagePan" label="Pan page" />
        <Tool name="pageFull" label="Zoom whole page" />
        <Tool name="pageOne" label="Zoom to 100%" />
        <Sep />
        <Tool name="pageIn" label="Page zoom in" />
        <Tool name="pageOut" label="Page zoom out" />
        <Sep />
        <Tool name="pageBack" label="Previous page extent" />
        <Tool name="pageForward" label="Next page extent" />
        <div className="relative flex w-[60px] shrink-0 items-center border border-[#d0d0d0] bg-white p-[3px]">
          <select
            aria-label="Page zoom"
            className="h-[18px] w-[27px] appearance-none bg-[#1874cd] font-['Liberation_Mono',monospace] text-[15px] leading-[18px] text-[#0d4f94]"
          >
            <option>00%</option>
          </select>
          <Svg box="0 0 12 8" className="pointer-events-none absolute right-2 h-2 w-3">
            <path d="M1 1l5 5 5-5" stroke="#aaa" strokeWidth="1.4" />
          </Svg>
        </div>
        <Sep />
        <Tool name="draft" label="Toggle draft mode" faded />
        <Tool name="focus" label="Focus data frame" />
        <Tool name="layout" label="Change layout" />
        <Tool name="pages" label="Data driven pages" />
        <div className="w-[2px]" />
        <Overflow />
      </Bar>
      <Bar>
        <div className="flex shrink-0 items-center gap-[10px] pr-[7px] pl-1">
          <Grip />
          {SWAT_MENUS.map(name => (
            <button key={name} className="flex items-center gap-1 whitespace-nowrap">
              {name}
              <Caret />
            </button>
          ))}
        </div>
        <Overflow />
      </Bar>
    </div>
  </div>
);

/* ---------- panels ---------- */

const Chevron: FC<{ d: string }> = ({ d }) => (
  <Svg box="0 0 12 12" className="h-[10px] w-[10px]">
    <path d={d} stroke="#444" strokeWidth="2" />
  </Svg>
);

const LEFT = 'M8 1L3 6l5 5';
const RIGHT = 'M4 1l5 5-5 5';
const UP = 'M1 8l5-5 5 5';
const DOWN = 'M1 4l5 5 5-5';

const LayerPath: FC = () => (
  <div className="flex h-[27px] items-center whitespace-nowrap">
    <span className="text-xl">AAAAA</span>青年基金申请\基金
  </div>
);

const ContentsPanel: FC = () => (
  <section className="flex w-[206px] shrink-0 flex-col overflow-hidden border-r border-b-2 border-[#848484] bg-[#fdfdfd]">
    <header className="flex h-[22px] shrink-0 items-center justify-end gap-2 bg-[#c8d8e6] pr-1">
      <Svg box="0 0 10 12" className="h-3 w-[10px]">
        <path d="M3 1h5v6H3zM1 7h9M6 7v4M7 1v6" stroke="#111" strokeWidth="1.2" />
      </Svg>
      <Svg box="0 0 8 8" className="h-2 w-2">
        <path d="M1 1l6 6M7 1L1 7" stroke="#111" strokeWidth="1.500" />
      </Svg>
    </header>
    <div className="flex h-[27px] shrink-0 items-center border-b border-[#848484] bg-linear-to-b from-[#fbfbfb] to-[#ececec] pl-[6px]">
      <Svg box="0 0 13 14" className="h-[14px] w-[13px]">
        <path d="M.5.5h12v13H.5z" fill="#fff" stroke="#465a6e" />
        <path d="M6 3h5M6 5h5M6 9h5M6 11h5" stroke="#789" />
        <path d="M2 3h2v2H2zM2 9h2v2H2z" fill="#123" />
      </Svg>
    </div>
    <div className="flex flex-1 flex-col overflow-hidden pt-7 text-lg leading-[27px] text-[#111]">
      <LayerPath />
      <div className="h-[27px]">ou2_4l</div>
      <div className="h-[27px]" />
      <LayerPath />
      <div className="flex h-[27px] w-[35px] justify-end overflow-hidden bg-[#0a74cc] pr-[2px] text-[#e6f2fb]">
        hina
      </div>
    </div>
    <div className="flex h-6 shrink-0 items-center justify-end bg-[#efefef] pr-[10px]">
      <div className="mr-auto h-full w-[82px] bg-[#cacaca]" />
      <button aria-label="Scroll right">
        <Svg box="0 0 12 12" className="h-3 w-3">
          <path d={RIGHT} stroke="#444" strokeWidth="2" />
        </Svg>
      </button>
    </div>
  </section>
);

const MapPanel: FC = () => (
  <section className="flex min-w-0 flex-1 flex-col border-t-2 border-l border-[#707070] bg-[#f0f0f0]">
    <div className="flex min-h-0 flex-1">
      <div className="min-w-0 flex-1 overflow-hidden bg-[#fdfffe]">
        <ChinaMap />
      </div>
      <div className="flex w-[26px] shrink-0 flex-col items-center border-x border-[#ddd] pr-px">
        <button aria-label="Scroll up" className="flex h-4 items-center">
          <Chevron d={UP} />
        </button>
        <div className="w-full flex-1 bg-[#cacaca]" />
        <button aria-label="Scroll down" className="flex h-[19px] items-center">
          <Chevron d={DOWN} />
        </button>
      </div>
    </div>
    <div className="flex h-[26px] shrink-0 items-start border-t border-b-2 border-[#dcdcdc] pr-[26px]">
      <button aria-label="Data view" className="flex h-[14px] w-4 items-center justify-center bg-[#bcd8ef]">
        <Svg box="0 0 9 9" className="h-[9px] w-[9px]">
          <path d="M1 1h7v7H1z" fill="#cfe3c4" stroke="#173f5f" strokeWidth="1.4" />
          <path d="M3 6l3-4" stroke="#5d9a4a" />
        </Svg>
      </button>
      <button aria-label="Layout view" className="flex h-[14px] w-4 items-center justify-center">
        <Svg box="0 0 9 9" className="h-[9px] w-[9px]">
          <path d="M1 1h5l2 2v5H1zM3 4h3M3 6h3" stroke="#173f5f" strokeWidth="1.2" />
        </Svg>
      </button>
      <div className="mx-[3px] h-[14px] w-px bg-[#777]" />
      <button aria-label="Refresh" className="flex h-[14px] w-5 items-center justify-center">
        <Svg box="0 0 10 10" className="h-[10px] w-[10px]">
          <path d="M1 5a4 4 0 017-2M9 5a4 4 0 01-7 2M8 0v3H5M2 10V7h3" stroke="#173f5f" strokeWidth="1.3" />
        </Svg>
      </button>
      <button aria-label="Pause drawing" className="flex h-[14px] w-4 items-center justify-center">
        <Svg box="0 0 6 8" className="h-2 w-[6px]">
          <path d="M1 1v6M5 1v6" stroke="#29588c" strokeWidth="2" />
        </Svg>
      </button>
      <button aria-label="Scroll left" className="flex h-full w-4 items-center justify-center">
        <Chevron d={LEFT} />
      </button>
      <div className="h-full flex-1 bg-[#cacaca]" />
      <button aria-label="Scroll right" className="flex h-full w-[18px] items-center justify-center">
        <Chevron d={RIGHT} />
      </button>
    </div>
  </section>
);

const TOOLBOXES = [
  '3D Analyst 工具',
  'Data Interoperability 工具',
  'ENVI Tools',
  'Geostatistical Analyst 工具',
  'Network Analyst 工具',
  'Schematics 工具',
  'Spatial Analyst 工具',
  'Tracking Analyst 工具',
  '编辑工具',
  '地理编码工具',
  '多维工具',
  '分析工具',
  '服务器工具',
  '空间统计工具',
  '数据管理工具',
  '线性参考工具',
  '制图工具',
  '转换工具',
  '宗地结构工具',
];

const ToolboxPanel: FC = () => (
  <section className="flex w-[166px] shrink-0 flex-col overflow-hidden">
    <header className="flex h-[22px] shrink-0 items-center bg-[#bfcddb] pt-px pl-1">ArcToolbox</header>
    <div className="flex flex-1 flex-col overflow-hidden border border-r-0 border-[#848484] bg-[#fdfdfd] pt-px">
      <div className="flex h-5 shrink-0 items-center gap-1 pl-[5px]">
        <Svg className="h-4 w-4 shrink-0">
          <path d="M1 3h10l3 4h17v22H1z" fill="#f0d878" stroke="#7d6a22" strokeWidth="2" />
          <g transform="translate(4 9) scale(.8 .7)">
            <Toolbox />
          </g>
        </Svg>
        ArcToolbox
      </div>
      {TOOLBOXES.map(name => (
        <div key={name} className="flex h-5 shrink-0 items-center whitespace-nowrap pl-2">
          <button aria-label={`Expand ${name}`}>
            <Svg box="0 0 9 9" className="h-[9px] w-[9px]">
              <path d="M.5.5h8v8h-8z" fill="#fff" stroke="#8a8f96" />
              <path d="M2 4.500h5M4.500 2v5" stroke="#1c2f57" />
            </Svg>
          </button>
          <Svg className="mr-[5px] ml-[6px] h-4 w-4 shrink-0">
            <Toolbox />
          </Svg>
          {name}
        </div>
      ))}
    </div>
    <nav className="flex h-5 shrink-0 gap-px pl-[2px] text-[12px]">
      <button className="flex w-[76px] shrink-0 items-center gap-1 rounded-b border border-t-0 border-[#a5a5a5] pl-1 text-[#777]">
        <Svg className="h-4 w-4 shrink-0">
          <path d="M2 2h28v28H2z" fill="#fff" stroke="#456" strokeWidth="2" />
          <path d="M7 23l8-14 9 13" stroke="#2d8b57" strokeWidth="3" />
          <path d="M21 20h6v6h-6z" fill="#a22" />
        </Svg>
        编辑草...
      </button>
      <button className="flex w-[76px] shrink-0 items-center gap-1 rounded-b border border-t-0 border-[#8a8a8a] bg-white pl-1">
        <Svg className="h-4 w-4 shrink-0">{icons.toolboxWindow}</Svg>
        ArcTo...
      </button>
      <button aria-label="Catalog" className="flex shrink-0 items-center pl-1">
        <Svg className="h-4 w-4">
          <rect x="1" y="1" width="30" height="30" fill="#fff" stroke="#2e7f9c" strokeWidth="2" />
          <path d="M5 9h20M5 15h20M5 21h20" stroke="#2e9fae" strokeWidth="3" />
        </Svg>
      </button>
    </nav>
  </section>
);

/* ---------- floating things ---------- */

const GeostatWindow: FC = () => (
  <div className="absolute top-[181px] left-[199px] flex h-[62px] w-[182px] flex-col border-2 border-[#858585] bg-linear-to-b from-[#fcfcfc] to-[#ececec] p-px">
    <div className="flex h-[17px] shrink-0 items-center bg-[#9a9a9a] pr-1 pl-[2px] text-white">
      Geostatistical Analyst
      <Svg box="0 0 8 4" className="mr-2 ml-auto h-1 w-2">
        <path d="M0 0h8L4 4z" fill="#fff" />
      </Svg>
      <button aria-label="Close">
        <Svg box="0 0 9 9" className="h-[9px] w-[9px]">
          <path d="M1 1l7 7M8 1L1 8" stroke="#fff" strokeWidth="2" />
        </Svg>
      </button>
    </div>
    <div className="flex flex-1 items-center pr-[2px] pl-[5px]">
      <button className="flex items-center gap-1 whitespace-nowrap">
        Geostatistical Analyst
        <Caret />
      </button>
      <button aria-label="Geostatistical wizard" className="ml-auto">
        <Svg>
          <path d="M1 13L11 5l14-1 6 8-15 18z" fill="#4f8219" />
          <path d="M1 13L11 4l14 1 6 8-7 8-8 1-9-2z" fill="#93bd3c" />
          <path d="M6 11v7M11 8v13M16 12v10M21 9v12M26 12v6" stroke="#d3e686" strokeWidth="2" />
          <circle cx="25" cy="7" r="6" fill="#f4f3b8" />
          <path d="M1 13l15 17 15-17" stroke="#38560f" strokeWidth="2" />
        </Svg>
      </button>
    </div>
  </div>
);

const UsageBall: FC = () => (
  <div className="absolute top-[61px] right-[137px] h-[120px] w-[120px]">
    <Svg box="0 0 120 120" className="h-full w-full">
      <defs>
        <radialGradient id="ball">
          <stop offset=".5" stopColor="#fff" />
          <stop offset="1" stopColor="#b9f5c6" />
        </radialGradient>
      </defs>
      <circle cx="60" cy="60" r="60" fill="#f3f3f3" />
      <circle cx="60" cy="60" r="50" fill="#fff" stroke="#e3e3e3" />
      <circle cx="60" cy="60" r="43" fill="url(#ball)" stroke="#58c182" strokeWidth="2" />
      <path d="M60 13.500A46.500 46.500 0 0 1 97 88.500" stroke="#45dc6c" strokeWidth="7" />
      <path d="M34 76c0-5 6-5 6 0v5c4 5-1 8-3 8s-7-3-3-8z" fill="#ffd58a" stroke="#eb9d2f" strokeWidth="1.500" />
      <circle cx="37" cy="84" r="2" fill="#e98c1c" />
    </Svg>
    <div className="absolute inset-x-0 top-[28px] flex items-baseline justify-center font-['Inter',sans-serif] leading-10 text-[#444]">
      <span className="text-[32px] font-light">36</span>
      <span className="text-base">%</span>
    </div>
    <div className="absolute top-[71px] left-[50px] text-[14px] leading-5 text-[#333]">55°C</div>
  </div>
);

const CloudDrop: FC = () => (
  <div className="absolute top-[166px] right-0 flex h-[38px] w-[104px] overflow-hidden rounded-l-lg border border-r-0 border-[#3b9fe8] bg-linear-to-r from-[#a9defa] to-[#d3f0ff]">
    <div className="flex w-11 shrink-0 items-center justify-center bg-[#269dfb]">
      <Svg className="h-7 w-7" box="0 0 32 32">
        <circle cx="16" cy="10" r="5" stroke="#fff" strokeWidth="5" />
        <circle cx="9" cy="20" r="5" stroke="#fff" strokeWidth="5" />
        <circle cx="23" cy="20" r="5" stroke="#fff" strokeWidth="5" />
      </Svg>
    </div>
    <span className="ml-[18px] whitespace-nowrap text-lg leading-9 text-[#5fb4ea]">拖拽上传</span>
  </div>
);

const TimerBall: FC = () => (
  <div className="absolute top-[519px] -right-[17px] flex h-[46px] w-[46px] items-center overflow-hidden rounded-full border-2 border-[#d9efff] bg-linear-to-b from-[#4189e6] to-[#62bdf8] pl-[3px] text-[13px] text-white">
    02:4
  </div>
);

/* ---------- taskbar ---------- */

const Cloud: FC = () => (
  <>
    <rect width="36" height="36" rx="5" fill="#fff" />
    <circle cx="18" cy="13" r="5" stroke="#e0525b" strokeWidth="3" />
    <path d="M13 13a5 5 0 0110 0" stroke="#35a5e5" strokeWidth="3" />
    <circle cx="11" cy="22" r="5" stroke="#35a5e5" strokeWidth="3" />
    <circle cx="25" cy="22" r="5" stroke="#2d8fdc" strokeWidth="3" />
    <path d="M12 34h6" stroke="#d33" strokeWidth="2" />
    <path d="M18 34h6" stroke="#36c" strokeWidth="2" />
  </>
);

const appIcons: Record<string, ReactNode> = {
  folder: (
    <>
      <path d="M11 4h16v26H11z" fill="#f2c14e" />
      <path d="M9 4h5l5 4v20l-5 3-5-2z" fill="#ffe28d" />
      <path d="M14 31l1 3" stroke="#e3b23f" strokeWidth="2" />
    </>
  ),
  edge: (
    <>
      <defs>
        <linearGradient id="edgeTop" x1="0" y1="0" x2="1" y2="0">
          <stop offset="0" stopColor="#2ba7de" />
          <stop offset="1" stopColor="#62dd5a" />
        </linearGradient>
      </defs>
      <path d="M1 17C2 7 9 0 18 0c10 0 18 7 18 16 0 6-4 9-9 9-4 0-7-2-6-4 4-5 0-10-7-10C8 11 3 13 1 17z" fill="url(#edgeTop)" />
      <path d="M1 17c2-4 7-6 13-6-5 3-6 9-3 14 3 6 10 9 21 4-4 5-9 7-14 7C8 36 0 28 1 17z" fill="#1769c2" />
      <path d="M14 11c-5 4-3 20 10 21 3 0 6-1 8-3-9 1-15-3-15-9 0-4 3-6 4-5-1-3-4-4-7-4z" fill="#0d4f9e" />
    </>
  ),
  word: (
    <>
      <path d="M3 6l4-5h27v34H3z" fill="#dfe9f8" stroke="#3b6db0" strokeWidth="2" />
      <path d="M4 6l4-4h25v12L4 22z" fill="#9fc0ea" />
      <path d="M7 9l4 15 5-13 5 13 4-15" stroke="#1f52a6" strokeWidth="4" />
      <path d="M24 24l10 2v9H22z" fill="#fff" stroke="#9db8dc" />
    </>
  ),
  cloud: <Cloud />,
  arcmap: (
    <>
      <circle cx="18" cy="18" r="17" fill="#185f70" />
      <path d="M18 1a17 17 0 0117 17c-4 2-6-4-10-3S12 8 18 1z" fill="#3fa0a8" />
      <path d="M21 22l12 12" stroke="#b36b35" strokeWidth="4" />
      <circle cx="16" cy="15" r="9" fill="#cfe7f3" stroke="#8fb6cf" strokeWidth="2" />
      <path d="M11 13c2-4 6-5 9-3" stroke="#fff" strokeWidth="3" />
    </>
  ),
};

const TaskButton: FC<{ icon: string; label: string }> = ({ icon, label }) => (
  <button className="flex h-full w-[154px] shrink-0 items-center gap-1 whitespace-nowrap border-b-[3px] border-[#1fa9a4] pl-1 text-lg">
    <Svg box="0 0 36 36" className="h-9 w-9 shrink-0">
      {appIcons[icon]}
    </Svg>
    {label}
  </button>
);

const Taskbar: FC = () => (
  <footer className="flex h-[57px] shrink-0 items-center bg-[#ebebeb] text-[#111]">
    <button aria-label="Search" className="w-[62px]">
      <Svg box="0 0 26 30" className="h-[30px] w-[26px]">
        <circle cx="16" cy="10" r="8" stroke="#111" strokeWidth="1.600" />
        <path d="M10 16L-1 28" stroke="#111" strokeWidth="1.600" />
      </Svg>
    </button>
    <button aria-label="Cortana" className="flex w-11 justify-center">
      <Svg box="0 0 24 24" className="h-6 w-6">
        <circle cx="12" cy="12" r="9.500" stroke="#111" strokeWidth="3" />
      </Svg>
    </button>
    <button aria-label="Task view" className="flex w-[100px] justify-center">
      <Svg box="0 0 26 24" className="h-6 w-[26px]">
        <path d="M2 1v3h15V1M2 23v-3h15v3M3 7h13v10H3zM23 0v6M23 12v12" stroke="#111" strokeWidth="1.500" />
        <path d="M21 7h4v4h-4z" fill="#111" />
      </Svg>
    </button>
    <button aria-label="Magnifier" className="mr-[29px] flex w-12 justify-center pb-1">
      <Svg>
        <circle cx="15" cy="15" r="13" stroke="#111" strokeWidth="2.500" />
        <path d="M24 25l5 5" stroke="#111" strokeWidth="4" strokeLinecap="round" />
        <circle cx="15" cy="14" r="4.500" fill="#111" />
        <circle cx="13" cy="11" r="2" fill="#ebebeb" />
      </Svg>
    </button>
    <div className="flex h-full gap-[14px]">
      <TaskButton icon="folder" label="中国数据" />
      <TaskButton icon="edge" label="土地利用和..." />
      <button aria-label="Browser" className="flex w-[53px] shrink-0 items-center justify-center pr-[2px] pb-[3px]">
        <Svg box="0 0 36 36" className="h-9 w-9">
          <ellipse cx="18" cy="18" rx="13" ry="14" fill="#6cc234" />
          <path d="M10 19h17c1-11-16-12-17 0 0 9 12 10 16 4" stroke="#fff" strokeWidth="4" />
          <path d="M31 3c2-5-8-1-15 6S2 29 5 34c2 2 6-1 6-1" stroke="#57a92b" strokeWidth="2" />
        </Svg>
      </button>
      <TaskButton icon="word" label="公式 - Mic..." />
      <TaskButton icon="cloud" label="欢迎使用百..." />
      <TaskButton icon="arcmap" label="无标题 - A..." />
    </div>
    <div className="ml-auto flex items-center pb-[2px]">
      <button aria-label="News" className="mr-6">
        <Svg box="0 0 38 26" className="h-[26px] w-[38px]">
          <path d="M2 2h30v22H2zM32 6h4v15c0 3-4 3-4 0" stroke="#111" strokeWidth="2.500" />
          <path d="M6 6h12M6 10h10v10H6zM10 10v6h5M22 5h5v5h-5zM19 13h11v4H19zM19 20h11" stroke="#111" strokeWidth="2" />
        </Svg>
      </button>
      <button aria-label="Hidden icons" className="mr-[18px]">
        <Svg box="0 0 20 12" className="h-3 w-5">
          <path d="M1 11l9-9 9 9" stroke="#111" strokeWidth="1.500" />
        </Svg>
      </button>
      <button aria-label="Microphone" className="mr-4">
        <Svg box="0 0 16 26" className="h-[26px] w-4">
          <rect x="3" y="1" width="10" height="18" rx="1" fill="#111" />
          <path d="M1 14v4c0 4 14 4 14 0v-4M8 21v4M4 25h8" stroke="#111" strokeWidth="1.500" />
        </Svg>
      </button>
      <button aria-label="Updates" className="mr-[10px]">
        <Svg box="0 0 26 26" className="h-[26px] w-[26px]">
          <path d="M1 4l23-3v22L1 21z" stroke="#111" strokeWidth="1.500" />
          <path d="M7 12c1-5 8-5 9-1M16 7v4h-4M16 13c-1 5-8 5-9 1" stroke="#111" strokeWidth="1.500" />
          <circle cx="19" cy="20" r="6" fill="#f29a1f" />
        </Svg>
      </button>
      <button aria-label="Battery" className="mr-[15px]">
        <Svg box="0 0 25 18" className="h-[18px] w-[25px]">
          <path d="M8 4h14v12H6M22 8h2v5h-2" stroke="#111" strokeWidth="1.500" />
          <path d="M9 5h12v10H8z" fill="#111" />
          <path d="M1 4h6v4H2zM3 1v3M6 1v3M4 8v6h3" stroke="#111" strokeWidth="1.500" />
        </Svg>
      </button>
      <button aria-label="Network" className="mr-[14px]">
        <Svg box="0 0 20 20" className="h-5 w-5">
          <path d="M1 19C2 9 9 2 19 1M6 19c1-7 6-12 13-13M11 19c1-4 4-7 8-8" stroke="#111" strokeWidth="1.400" />
          <circle cx="17" cy="17" r="2" fill="#111" />
        </Svg>
      </button>
      <button aria-label="Volume" className="mr-[14px]">
        <Svg box="0 0 23 20" className="h-5 w-[23px]">
          <path d="M1 7h4l5-5v16l-5-5H1z" stroke="#111" strokeWidth="1.400" />
          <path d="M13 7c2 2 2 4 0 6M16 5c3 3 3 7 0 10" stroke="#555" strokeWidth="1.400" />
          <path d="M19 2c4 5 4 11 0 16" stroke="#aaa" strokeWidth="1.400" />
        </Svg>
      </button>
      <button className="mr-[21px] text-xl font-bold">中</button>
      <button className="mr-7 flex h-6 w-6 items-center justify-center border border-[#333] text-lg">拼</button>
      <button className="mr-8 w-[88px] pb-1 text-center text-lg leading-6 whitespace-nowrap">
        17:30 周日
        <br />
        2021/7/4
      </button>
      <button aria-label="Notifications" className="mr-[3px] pb-1">
        <Svg box="0 0 24 26" className="h-[26px] w-6">
          <path d="M4 2h19v21H4M4 2v3H1v19h16l2-1M8 8h11M8 12h11M8 17h6" stroke="#111" strokeWidth="1.600" />
        </Svg>
      </button>
    </div>
  </footer>
);

/* ---------- page ---------- */

export default function App() {
  return (
    <div className="relative flex h-screen flex-col overflow-hidden bg-[#f0f0f0] font-['Noto_Sans','Noto_Sans_CJK_SC',sans-serif] text-[12px] leading-4 text-[#111]">
      <header className="flex h-[34px] shrink-0 items-center bg-[#fdfdfd] text-lg text-[#999]">
        <h1 className="-ml-[2px] whitespace-nowrap">- ArcMap</h1>
        <div className="mr-1 ml-auto flex items-center gap-[54px]">
          <button aria-label="Minimize">
            <Svg box="0 0 15 15" className="h-[15px] w-[15px]">
              <path d="M0 7.500h15" stroke="#888" />
            </Svg>
          </button>
          <button aria-label="Restore">
            <Svg box="0 0 15 15" className="h-[15px] w-[15px]">
              <path d="M.5 3.500h11v11H.5zM3.500 3V.5h11v11H12" stroke="#777" />
            </Svg>
          </button>
        </div>
      </header>
      <nav className="flex h-7 shrink-0 items-center gap-[17px] bg-linear-to-r from-[#f0f0f0] to-[#f9f9f9]">
        <button className="-ml-[2px]">E)</button>
        {MENUS.map(name => (
          <button key={name} className="whitespace-nowrap">
            {name}
          </button>
        ))}
      </nav>
      <Toolbars />
      <main className="flex min-h-0 flex-1 gap-[6px]">
        <ContentsPanel />
        <MapPanel />
        <ToolboxPanel />
      </main>
      <div className="flex h-[25px] shrink-0 items-center justify-end gap-[9px] bg-[#eeeeee] pr-[43px]">
        <span>103.982</span>
        <span>36.633 十进制度</span>
      </div>
      <Taskbar />
      <GeostatWindow />
      <UsageBall />
      <CloudDrop />
      <TimerBall />
    </div>
  );
}
